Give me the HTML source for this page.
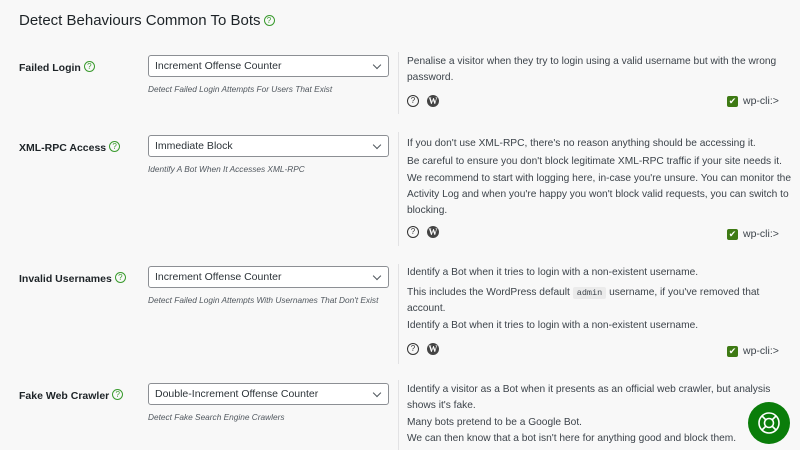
<!DOCTYPE html>
<html><head><style>
body{margin:0;width:800px;height:450px;background:#f8f8f8;font-family:"Liberation Sans",sans-serif;color:#3c434a;position:relative;overflow:hidden}
.a{position:absolute;white-space:nowrap}
h1{position:absolute;left:19px;top:12px;margin:0;font-size:15px;font-weight:normal;color:#1d2327}
.q{display:inline-block;width:9px;height:9px;border:1px solid #3a9b2e;border-radius:50%;color:#3a9b2e;font-size:8px;line-height:9px;text-align:center;vertical-align:2px;margin-left:3px;font-weight:normal}
.lbl{font-size:10.5px;font-weight:bold;color:#1d2327;left:19px}
.sel{position:absolute;left:148px;border:1px solid #8c8f94;border-radius:3px;background:#fff;font-size:10.5px;line-height:20px;padding-left:6px;box-sizing:border-box;width:241px;height:22px;color:#2c3338}
.sel:after{content:"";position:absolute;right:8px;top:6px;width:5px;height:5px;border-right:1.5px solid #50575e;border-bottom:1.5px solid #50575e;transform:rotate(45deg)}
.cap{font-size:8.3px;font-style:italic;color:#50575e;left:148px}
.t{font-size:10.2px;left:407px;color:#3c434a}
.div{position:absolute;left:398px;width:1px;background:#e2e2e4}
.hq{position:absolute;width:10px;height:10px;border:1.3px solid #333;border-radius:50%;font-size:8px;line-height:10px;text-align:center;color:#333}
.wp{position:absolute;width:12px;height:12px;border-radius:50%;background:#444;color:#fff;font-size:9px;font-weight:bold;line-height:12px;text-align:center;font-family:"Liberation Serif",serif}
.cb{position:absolute;left:727px;width:11px;height:11px;background:#3e7a14;border-radius:2px;color:#fff;font-size:9px;line-height:11px;text-align:center}
.cli{font-size:10.5px;left:743px}
code{background:#ebebeb;font-family:"Liberation Mono",monospace;font-size:8.5px;padding:1px 4px;border-radius:2px}
.fab{position:absolute;left:748px;top:402px;width:42px;height:42px;border-radius:50%;background:#0a7d0a}
</style></head><body>
<h1>Detect Behaviours Common To Bots<span class="q">?</span></h1>

<div class="a lbl" style="top:61px">Failed Login<span class="q">?</span></div>
<div class="sel" style="top:55px">Increment Offense Counter</div>
<div class="a cap" style="top:84px">Detect Failed Login Attempts For Users That Exist</div>
<div class="div" style="top:52px;height:62px"></div>
<div class="a t" style="top:56px">Penalise a visitor when they try to login using a valid username but with the wrong</div>
<div class="a t" style="top:72px">password.</div>
<div class="hq" style="left:407px;top:95px">?</div><div class="wp" style="left:427px;top:95px">W</div>
<div class="cb" style="top:96px">✔</div><div class="a cli" style="top:95px">wp-cli:&gt;</div>

<div class="a lbl" style="top:141px">XML-RPC Access<span class="q">?</span></div>
<div class="sel" style="top:135px">Immediate Block</div>
<div class="a cap" style="top:164px">Identify A Bot When It Accesses XML-RPC</div>
<div class="div" style="top:132px;height:114px"></div>
<div class="a t" style="top:138px">If you don't use XML-RPC, there's no reason anything should be accessing it.</div>
<div class="a t" style="top:156px">Be careful to ensure you don't block legitimate XML-RPC traffic if your site needs it.</div>
<div class="a t" style="top:173px">We recommend to start with logging here, in-case you're unsure. You can monitor the</div>
<div class="a t" style="top:189px">Activity Log and when you're happy you won't block valid requests, you can switch to</div>
<div class="a t" style="top:205px">blocking.</div>
<div class="hq" style="left:407px;top:226px">?</div><div class="wp" style="left:427px;top:226px">W</div>
<div class="cb" style="top:229px">✔</div><div class="a cli" style="top:228px">wp-cli:&gt;</div>

<div class="a lbl" style="top:272px">Invalid Usernames<span class="q">?</span></div>
<div class="sel" style="top:266px">Increment Offense Counter</div>
<div class="a cap" style="top:295px">Detect Failed Login Attempts With Usernames That Don't Exist</div>
<div class="div" style="top:264px;height:100px"></div>
<div class="a t" style="top:267px">Identify a Bot when it tries to login with a non-existent username.</div>
<div class="a t" style="top:287px">This includes the WordPress default <code>admin</code> username, if you've removed that</div>
<div class="a t" style="top:303px">account.</div>
<div class="a t" style="top:320px">Identify a Bot when it tries to login with a non-existent username.</div>
<div class="hq" style="left:407px;top:343px">?</div><div class="wp" style="left:427px;top:343px">W</div>
<div class="cb" style="top:346px">✔</div><div class="a cli" style="top:345px">wp-cli:&gt;</div>

<div class="a lbl" style="top:389px">Fake Web Crawler<span class="q">?</span></div>
<div class="sel" style="top:383px">Double-Increment Offense Counter</div>
<div class="a cap" style="top:412px">Detect Fake Search Engine Crawlers</div>
<div class="div" style="top:380px;height:70px"></div>
<div class="a t" style="top:384px">Identify a visitor as a Bot when it presents as an official web crawler, but analysis</div>
<div class="a t" style="top:400px">shows it's fake.</div>
<div class="a t" style="top:417px">Many bots pretend to be a Google Bot.</div>
<div class="a t" style="top:433px">We can then know that a bot isn't here for anything good and block them.</div>

<div class="fab"><svg width="42" height="42" viewBox="0 0 42 42" fill="none" stroke="#fff" stroke-width="1.6"><circle cx="21" cy="21" r="10"/><circle cx="21" cy="21" r="4.5"/><path d="M14 14l4 4M28 14l-4 4M14 28l4-4M28 28l-4-4"/></svg></div>
</body></html>
